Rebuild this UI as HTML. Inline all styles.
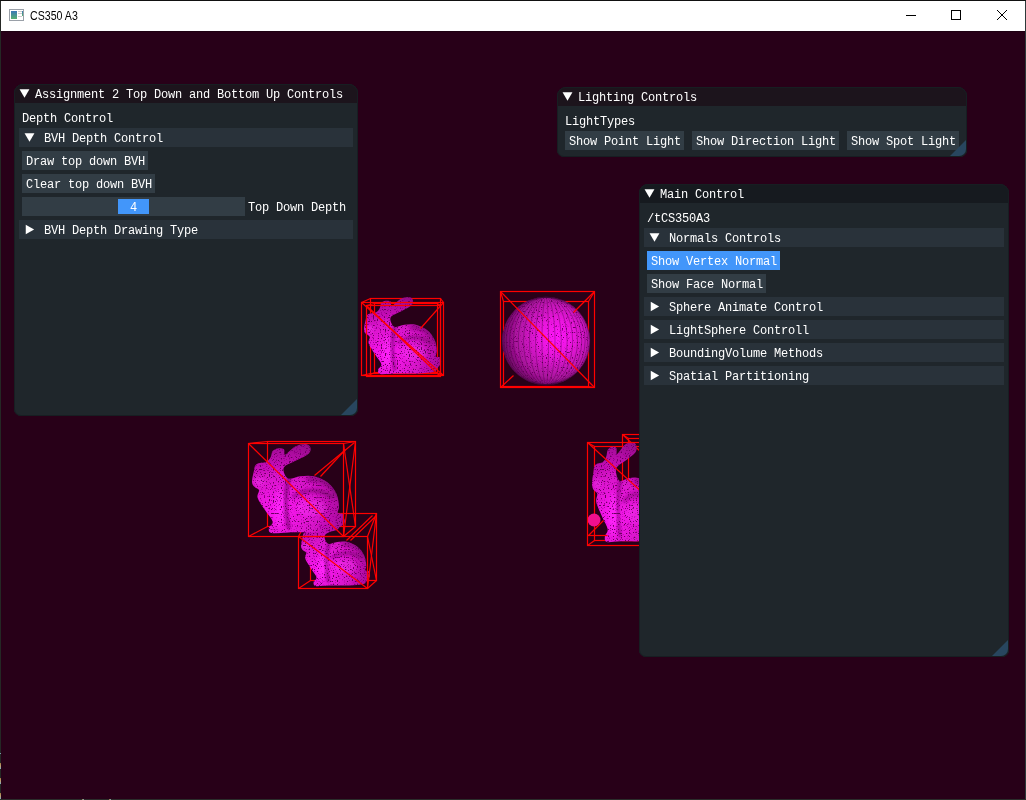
<!DOCTYPE html>
<html><head><meta charset="utf-8"><style>
html,body{margin:0;padding:0;}
body{width:1026px;height:800px;position:relative;overflow:hidden;background:#280018;font-family:"Liberation Sans",sans-serif;}
.t{position:absolute;font:12px/13px "Liberation Mono",monospace;letter-spacing:-0.2px;white-space:pre;will-change:transform;}
.r{position:absolute;}
.win{position:absolute;border-radius:9px 9px 7px 7px;}
#ttl{position:absolute;left:1px;top:1px;width:1024px;height:30px;background:#fff;}
</style></head><body>
<div id="ttl"></div>
<div class="r" style="left:0;top:0;width:1px;height:800px;background:#252825"></div>
<div class="r" style="left:1025px;top:0;width:1px;height:800px;background:#2d3a3a"></div>
<div class="r" style="left:0;top:799px;width:1026px;height:1px;background:#2b2d2b"></div>
<div class="r" style="left:0;top:0;width:1026px;height:1px;background:#111111"></div>
<div class="r" style="left:1px;top:31px;width:1024px;height:1px;background:#1e0012"></div>
<div class="r" style="left:0;top:753px;width:1px;height:1px;background:#7a9aaa"></div>
<div class="r" style="left:82px;top:799px;width:2px;height:1px;background:linear-gradient(90deg,#a07a40,#80a8c0)"></div>
<div class="r" style="left:109px;top:799px;width:2px;height:1px;background:linear-gradient(90deg,#a07a40,#80a8c0)"></div>
<div class="r" style="left:0;top:763px;width:1px;height:6px;background:linear-gradient(#a07a40,#c0a070,#80a8c0)"></div>
<div class="r" style="left:0;top:778px;width:1px;height:6px;background:linear-gradient(#a07a40,#c0a070,#80a8c0)"></div>
<div class="r" style="left:0;top:793px;width:1px;height:6px;background:linear-gradient(#a07a40,#c0a070,#80a8c0)"></div>
<div style="position:absolute;left:30px;top:9px;font:12px/15px 'Liberation Sans',sans-serif;color:#000;transform:scaleX(0.885);transform-origin:0 0">CS350 A3</div>
<svg style="position:absolute;left:0;top:0" width="1026" height="32"><rect x="9.5" y="9.5" width="14" height="11" fill="#fff" stroke="#9aa0a8"/><defs><linearGradient id="ig" x1="0" y1="0" x2="0" y2="1"><stop offset="0" stop-color="#3a78b8"/><stop offset="1" stop-color="#56b070"/></linearGradient></defs><rect x="11" y="11" width="6" height="8" fill="url(#ig)"/><rect x="22" y="11" width="1" height="5" fill="url(#ig)"/><rect x="18" y="11" width="4" height="1" fill="#ccc"/><rect x="18" y="13" width="4" height="1" fill="#ccc"/><rect x="18" y="16" width="4" height="1" fill="#ccc"/><line x1="906" y1="15.5" x2="916" y2="15.5" stroke="#000"/><rect x="951.5" y="10.5" width="9" height="9" fill="none" stroke="#000"/><line x1="997" y1="10" x2="1007" y2="20" stroke="#000"/><line x1="1007" y1="10" x2="997" y2="20" stroke="#000"/></svg>
<svg style="position:absolute;left:0;top:31px" width="1026" height="768" viewBox="0 31 1026 768"><defs><radialGradient id="bg" cx="0.3" cy="0.75" r="0.85"><stop offset="0" stop-color="#ff16f6"/><stop offset="0.5" stop-color="#d412c6"/><stop offset="1" stop-color="#8a0c7e"/></radialGradient><radialGradient id="sg" cx="0.62" cy="0.45" r="0.68"><stop offset="0" stop-color="#ff18fa"/><stop offset="0.3" stop-color="#e816dc"/><stop offset="0.7" stop-color="#a8129c"/><stop offset="1" stop-color="#500a48"/></radialGradient><clipPath id="bclip"><path d="M0.0,41.8 C0.0,39.0 1.2,33.7 2.0,30.5 C2.8,27.3 2.5,24.5 4.8,22.7 C7.1,20.9 13.0,21.3 15.6,19.9 C18.2,18.5 19.3,16.5 20.4,14.5 C21.5,12.5 21.1,9.6 22.4,8.0 C23.6,6.4 25.8,5.3 27.9,5.0 C29.9,4.7 33.4,4.8 34.7,6.0 C36.1,7.2 34.0,12.5 36.0,12.0 C38.0,11.5 43.3,4.8 46.9,2.8 C50.5,0.8 55.1,-0.1 57.8,0.0 C60.5,0.1 62.6,1.7 63.3,3.5 C64.0,5.3 64.2,8.2 61.9,10.6 C59.6,13.0 54.0,15.3 49.7,17.7 C45.4,20.1 38.5,22.4 36.0,24.8 C33.5,27.2 34.0,29.5 34.7,31.9 C35.4,34.3 37.2,38.3 40.1,39.0 C43.0,39.7 47.9,36.7 52.4,36.2 C56.9,35.7 62.3,35.0 67.3,36.2 C72.3,37.4 78.2,40.0 82.3,43.3 C86.4,46.6 89.8,51.5 91.8,56.0 C93.8,60.5 94.4,66.7 94.6,70.2 C94.8,73.8 92.5,75.9 93.2,77.3 C93.9,78.7 97.5,77.3 98.6,78.7 C99.7,80.1 100.5,83.7 100.0,85.8 C99.5,87.9 97.5,89.6 95.9,91.5 C94.3,93.4 94.8,95.9 90.5,97.2 C86.2,98.5 78.4,99.0 70.0,99.3 C61.6,99.6 48.2,99.2 40.1,99.3 C32.0,99.4 24.7,100.8 21.1,100.0 C17.5,99.2 18.2,96.4 18.4,94.3 C18.6,92.2 23.1,90.5 22.4,87.2 C21.7,83.9 17.0,79.0 14.3,74.5 C11.6,70.0 7.2,64.1 6.1,60.3 C5.0,56.5 8.2,53.9 7.5,51.8 C6.8,49.7 3.2,49.2 2.0,47.5 C0.8,45.8 0.0,44.6 0.0,41.8Z"/></clipPath><filter id="bl" x="-50%" y="-50%" width="200%" height="200%"><feGaussianBlur stdDeviation="2"/></filter><filter id="spk" x="0" y="0" width="1" height="1" filterUnits="objectBoundingBox"><feTurbulence type="fractalNoise" baseFrequency="0.75" numOctaves="1" seed="7" result="n"/><feColorMatrix in="n" type="matrix" values="0 0 0 0 0.14  0 0 0 0 0  0 0 0 0 0.11  0 0 0 9 -5.2" result="dots"/><feComposite in="dots" in2="SourceGraphic" operator="in" result="d2"/><feMerge><feMergeNode in="SourceGraphic"/><feMergeNode in="d2"/></feMerge></filter><filter id="spk2" x="0" y="0" width="1" height="1" filterUnits="objectBoundingBox"><feTurbulence type="fractalNoise" baseFrequency="0.8" numOctaves="1" seed="3" result="n"/><feColorMatrix in="n" type="matrix" values="0 0 0 0 0.14  0 0 0 0 0  0 0 0 0 0.11  0 0 0 9 -5.5" result="dots"/><feComposite in="dots" in2="SourceGraphic" operator="in" result="d2"/><feMerge><feMergeNode in="SourceGraphic"/><feMergeNode in="d2"/></feMerge></filter></defs><g fill="none" stroke="#ff0000" stroke-width="1.2"><rect x="370.5" y="298.5" width="70" height="75" /><line x1="361.5" y1="302.5" x2="370.5" y2="298.5"/><line x1="443.5" y1="302.5" x2="440.5" y2="298.5"/><line x1="361.5" y1="375.5" x2="370.5" y2="373.5"/><line x1="443.5" y1="375.5" x2="440.5" y2="373.5"/><rect x="374.5" y="303.5" width="63" height="69" /><line x1="366.5" y1="305.5" x2="374.5" y2="303.5"/><line x1="440.5" y1="305.5" x2="437.5" y2="303.5"/><line x1="366.5" y1="376.5" x2="374.5" y2="372.5"/><line x1="440.5" y1="376.5" x2="437.5" y2="372.5"/><rect x="503.5" y="301.5" width="85" height="85" /><line x1="500.5" y1="291.5" x2="503.5" y2="301.5"/><line x1="594.5" y1="291.5" x2="588.5" y2="301.5"/><line x1="500.5" y1="387.5" x2="503.5" y2="386.5"/><line x1="594.5" y1="387.5" x2="588.5" y2="386.5"/><rect x="267.5" y="441.5" width="88" height="85" /><line x1="248.5" y1="443.5" x2="267.5" y2="441.5"/><line x1="343.5" y1="443.5" x2="355.5" y2="441.5"/><line x1="248.5" y1="536.5" x2="267.5" y2="526.5"/><line x1="343.5" y1="536.5" x2="355.5" y2="526.5"/><rect x="310.5" y="513.5" width="66" height="67" /><line x1="298.5" y1="536.5" x2="310.5" y2="513.5"/><line x1="367.5" y1="536.5" x2="376.5" y2="513.5"/><line x1="298.5" y1="588.5" x2="310.5" y2="580.5"/><line x1="367.5" y1="588.5" x2="376.5" y2="580.5"/><rect x="594.5" y="446.5" width="106" height="94" /><line x1="587.5" y1="442.5" x2="594.5" y2="446.5"/><line x1="700.5" y1="442.5" x2="700.5" y2="446.5"/><line x1="587.5" y1="545.5" x2="594.5" y2="540.5"/><line x1="700.5" y1="545.5" x2="700.5" y2="540.5"/><rect x="628.5" y="438.5" width="72" height="102" /><line x1="622.5" y1="434.5" x2="628.5" y2="438.5"/><line x1="700.5" y1="434.5" x2="700.5" y2="438.5"/><line x1="622.5" y1="540.5" x2="628.5" y2="540.5"/><line x1="700.5" y1="540.5" x2="700.5" y2="540.5"/><rect x="622.5" y="434.5" width="78" height="106" /><line x1="314.5" y1="475.5" x2="354.5" y2="442.5"/><line x1="320.5" y1="476.5" x2="345.5" y2="449.5"/><line x1="346.5" y1="540.5" x2="372.5" y2="515.5"/><line x1="350.5" y1="540.5" x2="375.5" y2="516.5"/><line x1="622.5" y1="434.5" x2="660" y2="470"/></g><g filter="url(#spk)"><g transform="translate(364,297) scale(0.7700,0.7700)"><path d="M0.0,41.8 C0.0,39.0 1.2,33.7 2.0,30.5 C2.8,27.3 2.5,24.5 4.8,22.7 C7.1,20.9 13.0,21.3 15.6,19.9 C18.2,18.5 19.3,16.5 20.4,14.5 C21.5,12.5 21.1,9.6 22.4,8.0 C23.6,6.4 25.8,5.3 27.9,5.0 C29.9,4.7 33.4,4.8 34.7,6.0 C36.1,7.2 34.0,12.5 36.0,12.0 C38.0,11.5 43.3,4.8 46.9,2.8 C50.5,0.8 55.1,-0.1 57.8,0.0 C60.5,0.1 62.6,1.7 63.3,3.5 C64.0,5.3 64.2,8.2 61.9,10.6 C59.6,13.0 54.0,15.3 49.7,17.7 C45.4,20.1 38.5,22.4 36.0,24.8 C33.5,27.2 34.0,29.5 34.7,31.9 C35.4,34.3 37.2,38.3 40.1,39.0 C43.0,39.7 47.9,36.7 52.4,36.2 C56.9,35.7 62.3,35.0 67.3,36.2 C72.3,37.4 78.2,40.0 82.3,43.3 C86.4,46.6 89.8,51.5 91.8,56.0 C93.8,60.5 94.4,66.7 94.6,70.2 C94.8,73.8 92.5,75.9 93.2,77.3 C93.9,78.7 97.5,77.3 98.6,78.7 C99.7,80.1 100.5,83.7 100.0,85.8 C99.5,87.9 97.5,89.6 95.9,91.5 C94.3,93.4 94.8,95.9 90.5,97.2 C86.2,98.5 78.4,99.0 70.0,99.3 C61.6,99.6 48.2,99.2 40.1,99.3 C32.0,99.4 24.7,100.8 21.1,100.0 C17.5,99.2 18.2,96.4 18.4,94.3 C18.6,92.2 23.1,90.5 22.4,87.2 C21.7,83.9 17.0,79.0 14.3,74.5 C11.6,70.0 7.2,64.1 6.1,60.3 C5.0,56.5 8.2,53.9 7.5,51.8 C6.8,49.7 3.2,49.2 2.0,47.5 C0.8,45.8 0.0,44.6 0.0,41.8Z" fill="url(#bg)"/><g clip-path="url(#bclip)"><path d="M41,36 C36,52 35,72 40,95" fill="none" stroke="#500848" stroke-opacity="0.55" stroke-width="4" filter="url(#bl)"/><path d="M44,60 C56,50 74,50 88,60" fill="none" stroke="#500848" stroke-opacity="0.45" stroke-width="4" filter="url(#bl)"/><path d="M60,40 C72,36 86,44 96,60" fill="none" stroke="#500848" stroke-opacity="0.35" stroke-width="7" filter="url(#bl)"/><ellipse cx="30" cy="72" rx="6" ry="22" fill="#ff40ff" fill-opacity="0.35" filter="url(#bl)"/><ellipse cx="64" cy="72" rx="16" ry="10" fill="#ff40ff" fill-opacity="0.3" filter="url(#bl)"/><ellipse cx="8" cy="42" rx="6" ry="5" fill="#ff40ff" fill-opacity="0.35" filter="url(#bl)"/></g></g></g><g filter="url(#spk2)"><circle cx="546" cy="341" r="44" fill="url(#sg)"/></g><path d="M546,297 A43.54,44 0 0 0 546,385 M546,297 A42.12,44 0 0 0 546,385 M546,297 A39.78,44 0 0 0 546,385 M546,297 A36.56,44 0 0 0 546,385 M546,297 A32.54,44 0 0 0 546,385 M546,297 A27.81,44 0 0 0 546,385 M546,297 A22.46,44 0 0 0 546,385 M546,297 A16.62,44 0 0 0 546,385 M546,297 A10.42,44 0 0 0 546,385 M546,297 A3.99,44 0 0 0 546,385 M546,297 A2.53,44 0 0 1 546,385 M546,297 A9.00,44 0 0 1 546,385 M546,297 A15.27,44 0 0 1 546,385 M546,297 A21.20,44 0 0 1 546,385 M546,297 A26.66,44 0 0 1 546,385 M546,297 A31.54,44 0 0 1 546,385 M546,297 A35.73,44 0 0 1 546,385 M546,297 A39.13,44 0 0 1 546,385 M546,297 A41.68,44 0 0 1 546,385 M546,297 A43.30,44 0 0 1 546,385 M546,297 A43.98,44 0 0 1 546,385" fill="none" stroke="#3a0634" stroke-opacity="0.35" stroke-width="1"/><g filter="url(#spk)"><g transform="translate(301,517) scale(0.6900,0.6900)"><path d="M0.0,41.8 C0.0,39.0 1.2,33.7 2.0,30.5 C2.8,27.3 2.5,24.5 4.8,22.7 C7.1,20.9 13.0,21.3 15.6,19.9 C18.2,18.5 19.3,16.5 20.4,14.5 C21.5,12.5 21.1,9.6 22.4,8.0 C23.6,6.4 25.8,5.3 27.9,5.0 C29.9,4.7 33.4,4.8 34.7,6.0 C36.1,7.2 34.0,12.5 36.0,12.0 C38.0,11.5 43.3,4.8 46.9,2.8 C50.5,0.8 55.1,-0.1 57.8,0.0 C60.5,0.1 62.6,1.7 63.3,3.5 C64.0,5.3 64.2,8.2 61.9,10.6 C59.6,13.0 54.0,15.3 49.7,17.7 C45.4,20.1 38.5,22.4 36.0,24.8 C33.5,27.2 34.0,29.5 34.7,31.9 C35.4,34.3 37.2,38.3 40.1,39.0 C43.0,39.7 47.9,36.7 52.4,36.2 C56.9,35.7 62.3,35.0 67.3,36.2 C72.3,37.4 78.2,40.0 82.3,43.3 C86.4,46.6 89.8,51.5 91.8,56.0 C93.8,60.5 94.4,66.7 94.6,70.2 C94.8,73.8 92.5,75.9 93.2,77.3 C93.9,78.7 97.5,77.3 98.6,78.7 C99.7,80.1 100.5,83.7 100.0,85.8 C99.5,87.9 97.5,89.6 95.9,91.5 C94.3,93.4 94.8,95.9 90.5,97.2 C86.2,98.5 78.4,99.0 70.0,99.3 C61.6,99.6 48.2,99.2 40.1,99.3 C32.0,99.4 24.7,100.8 21.1,100.0 C17.5,99.2 18.2,96.4 18.4,94.3 C18.6,92.2 23.1,90.5 22.4,87.2 C21.7,83.9 17.0,79.0 14.3,74.5 C11.6,70.0 7.2,64.1 6.1,60.3 C5.0,56.5 8.2,53.9 7.5,51.8 C6.8,49.7 3.2,49.2 2.0,47.5 C0.8,45.8 0.0,44.6 0.0,41.8Z" fill="url(#bg)"/><g clip-path="url(#bclip)"><path d="M41,36 C36,52 35,72 40,95" fill="none" stroke="#500848" stroke-opacity="0.55" stroke-width="4" filter="url(#bl)"/><path d="M44,60 C56,50 74,50 88,60" fill="none" stroke="#500848" stroke-opacity="0.45" stroke-width="4" filter="url(#bl)"/><path d="M60,40 C72,36 86,44 96,60" fill="none" stroke="#500848" stroke-opacity="0.35" stroke-width="7" filter="url(#bl)"/><ellipse cx="30" cy="72" rx="6" ry="22" fill="#ff40ff" fill-opacity="0.35" filter="url(#bl)"/><ellipse cx="64" cy="72" rx="16" ry="10" fill="#ff40ff" fill-opacity="0.3" filter="url(#bl)"/><ellipse cx="8" cy="42" rx="6" ry="5" fill="#ff40ff" fill-opacity="0.35" filter="url(#bl)"/></g></g></g><g filter="url(#spk)"><g transform="translate(252,444) scale(0.9200,0.8900)"><path d="M0.0,41.8 C0.0,39.0 1.2,33.7 2.0,30.5 C2.8,27.3 2.5,24.5 4.8,22.7 C7.1,20.9 13.0,21.3 15.6,19.9 C18.2,18.5 19.3,16.5 20.4,14.5 C21.5,12.5 21.1,9.6 22.4,8.0 C23.6,6.4 25.8,5.3 27.9,5.0 C29.9,4.7 33.4,4.8 34.7,6.0 C36.1,7.2 34.0,12.5 36.0,12.0 C38.0,11.5 43.3,4.8 46.9,2.8 C50.5,0.8 55.1,-0.1 57.8,0.0 C60.5,0.1 62.6,1.7 63.3,3.5 C64.0,5.3 64.2,8.2 61.9,10.6 C59.6,13.0 54.0,15.3 49.7,17.7 C45.4,20.1 38.5,22.4 36.0,24.8 C33.5,27.2 34.0,29.5 34.7,31.9 C35.4,34.3 37.2,38.3 40.1,39.0 C43.0,39.7 47.9,36.7 52.4,36.2 C56.9,35.7 62.3,35.0 67.3,36.2 C72.3,37.4 78.2,40.0 82.3,43.3 C86.4,46.6 89.8,51.5 91.8,56.0 C93.8,60.5 94.4,66.7 94.6,70.2 C94.8,73.8 92.5,75.9 93.2,77.3 C93.9,78.7 97.5,77.3 98.6,78.7 C99.7,80.1 100.5,83.7 100.0,85.8 C99.5,87.9 97.5,89.6 95.9,91.5 C94.3,93.4 94.8,95.9 90.5,97.2 C86.2,98.5 78.4,99.0 70.0,99.3 C61.6,99.6 48.2,99.2 40.1,99.3 C32.0,99.4 24.7,100.8 21.1,100.0 C17.5,99.2 18.2,96.4 18.4,94.3 C18.6,92.2 23.1,90.5 22.4,87.2 C21.7,83.9 17.0,79.0 14.3,74.5 C11.6,70.0 7.2,64.1 6.1,60.3 C5.0,56.5 8.2,53.9 7.5,51.8 C6.8,49.7 3.2,49.2 2.0,47.5 C0.8,45.8 0.0,44.6 0.0,41.8Z" fill="url(#bg)"/><g clip-path="url(#bclip)"><path d="M41,36 C36,52 35,72 40,95" fill="none" stroke="#500848" stroke-opacity="0.55" stroke-width="4" filter="url(#bl)"/><path d="M44,60 C56,50 74,50 88,60" fill="none" stroke="#500848" stroke-opacity="0.45" stroke-width="4" filter="url(#bl)"/><path d="M60,40 C72,36 86,44 96,60" fill="none" stroke="#500848" stroke-opacity="0.35" stroke-width="7" filter="url(#bl)"/><ellipse cx="30" cy="72" rx="6" ry="22" fill="#ff40ff" fill-opacity="0.35" filter="url(#bl)"/><ellipse cx="64" cy="72" rx="16" ry="10" fill="#ff40ff" fill-opacity="0.3" filter="url(#bl)"/><ellipse cx="8" cy="42" rx="6" ry="5" fill="#ff40ff" fill-opacity="0.35" filter="url(#bl)"/></g></g></g><g filter="url(#spk)"><g transform="translate(592,442) scale(0.7000,1.0000)"><path d="M0.0,41.8 C0.0,39.0 1.2,33.7 2.0,30.5 C2.8,27.3 2.5,24.5 4.8,22.7 C7.1,20.9 13.0,21.3 15.6,19.9 C18.2,18.5 19.3,16.5 20.4,14.5 C21.5,12.5 21.1,9.6 22.4,8.0 C23.6,6.4 25.8,5.3 27.9,5.0 C29.9,4.7 33.4,4.8 34.7,6.0 C36.1,7.2 34.0,12.5 36.0,12.0 C38.0,11.5 43.3,4.8 46.9,2.8 C50.5,0.8 55.1,-0.1 57.8,0.0 C60.5,0.1 62.6,1.7 63.3,3.5 C64.0,5.3 64.2,8.2 61.9,10.6 C59.6,13.0 54.0,15.3 49.7,17.7 C45.4,20.1 38.5,22.4 36.0,24.8 C33.5,27.2 34.0,29.5 34.7,31.9 C35.4,34.3 37.2,38.3 40.1,39.0 C43.0,39.7 47.9,36.7 52.4,36.2 C56.9,35.7 62.3,35.0 67.3,36.2 C72.3,37.4 78.2,40.0 82.3,43.3 C86.4,46.6 89.8,51.5 91.8,56.0 C93.8,60.5 94.4,66.7 94.6,70.2 C94.8,73.8 92.5,75.9 93.2,77.3 C93.9,78.7 97.5,77.3 98.6,78.7 C99.7,80.1 100.5,83.7 100.0,85.8 C99.5,87.9 97.5,89.6 95.9,91.5 C94.3,93.4 94.8,95.9 90.5,97.2 C86.2,98.5 78.4,99.0 70.0,99.3 C61.6,99.6 48.2,99.2 40.1,99.3 C32.0,99.4 24.7,100.8 21.1,100.0 C17.5,99.2 18.2,96.4 18.4,94.3 C18.6,92.2 23.1,90.5 22.4,87.2 C21.7,83.9 17.0,79.0 14.3,74.5 C11.6,70.0 7.2,64.1 6.1,60.3 C5.0,56.5 8.2,53.9 7.5,51.8 C6.8,49.7 3.2,49.2 2.0,47.5 C0.8,45.8 0.0,44.6 0.0,41.8Z" fill="url(#bg)"/><g clip-path="url(#bclip)"><path d="M41,36 C36,52 35,72 40,95" fill="none" stroke="#500848" stroke-opacity="0.55" stroke-width="4" filter="url(#bl)"/><path d="M44,60 C56,50 74,50 88,60" fill="none" stroke="#500848" stroke-opacity="0.45" stroke-width="4" filter="url(#bl)"/><path d="M60,40 C72,36 86,44 96,60" fill="none" stroke="#500848" stroke-opacity="0.35" stroke-width="7" filter="url(#bl)"/><ellipse cx="30" cy="72" rx="6" ry="22" fill="#ff40ff" fill-opacity="0.35" filter="url(#bl)"/><ellipse cx="64" cy="72" rx="16" ry="10" fill="#ff40ff" fill-opacity="0.3" filter="url(#bl)"/><ellipse cx="8" cy="42" rx="6" ry="5" fill="#ff40ff" fill-opacity="0.35" filter="url(#bl)"/></g></g></g><circle cx="594" cy="520" r="6.5" fill="#f0108f"/><g fill="none" stroke="#ff0000" stroke-width="1.2"><rect x="361.5" y="302.5" width="82" height="73" /><line x1="361.5" y1="302.5" x2="443.5" y2="375.5"/><rect x="366.5" y="305.5" width="74" height="71" /><line x1="366.5" y1="305.5" x2="440.5" y2="376.5"/><rect x="500.5" y="291.5" width="94" height="96" /><line x1="500.5" y1="291.5" x2="594.5" y2="387.5"/><rect x="248.5" y="443.5" width="95" height="93" /><line x1="248.5" y1="443.5" x2="343.5" y2="536.5"/><rect x="298.5" y="536.5" width="69" height="52" /><line x1="298.5" y1="536.5" x2="367.5" y2="588.5"/><rect x="587.5" y="442.5" width="113" height="103" /><line x1="587.5" y1="442.5" x2="700.5" y2="545.5"/><line x1="343.5" y1="443.5" x2="355.5" y2="526.5"/><line x1="355.5" y1="441.5" x2="343.5" y2="536.5"/><line x1="367.5" y1="536.5" x2="376.5" y2="580.5"/><line x1="376.5" y1="513.5" x2="367.5" y2="588.5"/><line x1="594.5" y1="291.5" x2="573.5" y2="312.5"/><line x1="500.5" y1="387.5" x2="513.5" y2="375.5"/><line x1="443.5" y1="302.5" x2="420.5" y2="328.5"/><line x1="588.5" y1="535.5" x2="603.5" y2="520.5"/><line x1="587.5" y1="535.5" x2="607.5" y2="535.5"/></g></svg>
<div class="win" style="left:14px;top:84px;width:344px;height:332px;background:#1f262b;"></div>
<div class="r" style="left:14px;top:84px;width:344px;height:19px;background:#1c141c;border-radius:9px 9px 0 0"></div>
<div class="r" style="left:14px;top:84px;width:342px;height:330px;border:1px solid #171e22;border-radius:9px 9px 7px 7px"></div>
<div class="t" style="left:35px;top:89px;color:#ffffff">Assignment 2 Top Down and Bottom Up Controls</div>
<div class="t" style="left:22px;top:113px;color:#ffffff">Depth Control</div>
<div class="r" style="left:19px;top:128px;width:334px;height:19px;background:#29323a;"></div>
<div class="t" style="left:44px;top:133px;color:#ffffff">BVH Depth Control</div>
<div class="r" style="left:22px;top:151px;width:126px;height:19px;background:#323d45;"></div>
<div class="t" style="left:26px;top:156px;color:#ffffff">Draw top down BVH</div>
<div class="r" style="left:22px;top:174px;width:133px;height:19px;background:#323d45;"></div>
<div class="t" style="left:26px;top:179px;color:#ffffff">Clear top down BVH</div>
<div class="r" style="left:22px;top:197px;width:223px;height:19px;background:#323d45;"></div>
<div class="r" style="left:118px;top:199px;width:31px;height:15px;background:#4296fa;"></div>
<div class="t" style="left:130px;top:202px;color:#ffffff">4</div>
<div class="t" style="left:248px;top:202px;color:#ffffff">Top Down Depth</div>
<div class="r" style="left:19px;top:220px;width:334px;height:19px;background:#29323a;"></div>
<div class="t" style="left:44px;top:225px;color:#ffffff">BVH Depth Drawing Type</div>
<div class="win" style="left:557px;top:87px;width:410px;height:70px;background:#1f262b;"></div>
<div class="r" style="left:557px;top:87px;width:410px;height:19px;background:#1c141c;border-radius:9px 9px 0 0"></div>
<div class="r" style="left:557px;top:87px;width:408px;height:68px;border:1px solid #171e22;border-radius:9px 9px 7px 7px"></div>
<div class="t" style="left:578px;top:92px;color:#ffffff">Lighting Controls</div>
<div class="t" style="left:565px;top:116px;color:#ffffff">LightTypes</div>
<div class="r" style="left:565px;top:131px;width:119px;height:19px;background:#323d45;"></div>
<div class="t" style="left:569px;top:136px;color:#ffffff">Show Point Light</div>
<div class="r" style="left:692px;top:131px;width:147px;height:19px;background:#323d45;"></div>
<div class="t" style="left:696px;top:136px;color:#ffffff">Show Direction Light</div>
<div class="r" style="left:847px;top:131px;width:112px;height:19px;background:#323d45;"></div>
<div class="t" style="left:851px;top:136px;color:#ffffff">Show Spot Light</div>
<div class="win" style="left:639px;top:184px;width:370px;height:473px;background:#1f262b;"></div>
<div class="r" style="left:639px;top:184px;width:370px;height:19px;background:#161a1f;border-radius:9px 9px 0 0"></div>
<div class="r" style="left:639px;top:184px;width:368px;height:471px;border:1px solid #171e22;border-radius:9px 9px 7px 7px"></div>
<div class="t" style="left:660px;top:189px;color:#ffffff">Main Control</div>
<div class="t" style="left:647px;top:213px;color:#ffffff">/tCS350A3</div>
<div class="r" style="left:644px;top:228px;width:360px;height:19px;background:#29323a;"></div>
<div class="t" style="left:669px;top:233px;color:#ffffff">Normals Controls</div>
<div class="r" style="left:647px;top:251px;width:133px;height:19px;background:#4296fa;"></div>
<div class="t" style="left:651px;top:256px;color:#ffffff">Show Vertex Normal</div>
<div class="r" style="left:647px;top:274px;width:119px;height:19px;background:#323d45;"></div>
<div class="t" style="left:651px;top:279px;color:#ffffff">Show Face Normal</div>
<div class="r" style="left:644px;top:297px;width:360px;height:19px;background:#29323a;"></div>
<div class="t" style="left:669px;top:302px;color:#ffffff">Sphere Animate Control</div>
<div class="r" style="left:644px;top:320px;width:360px;height:19px;background:#29323a;"></div>
<div class="t" style="left:669px;top:325px;color:#ffffff">LightSphere Controll</div>
<div class="r" style="left:644px;top:343px;width:360px;height:19px;background:#29323a;"></div>
<div class="t" style="left:669px;top:348px;color:#ffffff">BoundingVolume Methods</div>
<div class="r" style="left:644px;top:366px;width:360px;height:19px;background:#29323a;"></div>
<div class="t" style="left:669px;top:371px;color:#ffffff">Spatial Partitioning</div>
<svg style="position:absolute;left:0;top:0" width="1026" height="800"><polygon points="24.50,97.78 19.56,89.22 29.44,89.22" fill="#fff"/><path d="M357,399 L357,408 A7,7 0 0 1 350,415 L341,415 Z" fill="#28465f"/><polygon points="29.50,141.78 24.56,133.22 34.44,133.22" fill="#fff"/><polygon points="34.14,229.50 25.74,234.35 25.74,224.65" fill="#fff"/><polygon points="567.50,100.78 562.56,92.22 572.44,92.22" fill="#fff"/><path d="M966,140 L966,149 A7,7 0 0 1 959,156 L950,156 Z" fill="#28465f"/><polygon points="649.50,197.78 644.56,189.22 654.44,189.22" fill="#fff"/><path d="M1008,640 L1008,649 A7,7 0 0 1 1001,656 L992,656 Z" fill="#28465f"/><polygon points="654.50,241.78 649.56,233.22 659.44,233.22" fill="#fff"/><polygon points="659.14,306.50 650.74,311.35 650.74,301.65" fill="#fff"/><polygon points="659.14,329.50 650.74,334.35 650.74,324.65" fill="#fff"/><polygon points="659.14,352.50 650.74,357.35 650.74,347.65" fill="#fff"/><polygon points="659.14,375.50 650.74,380.35 650.74,370.65" fill="#fff"/></svg>
</body></html>
